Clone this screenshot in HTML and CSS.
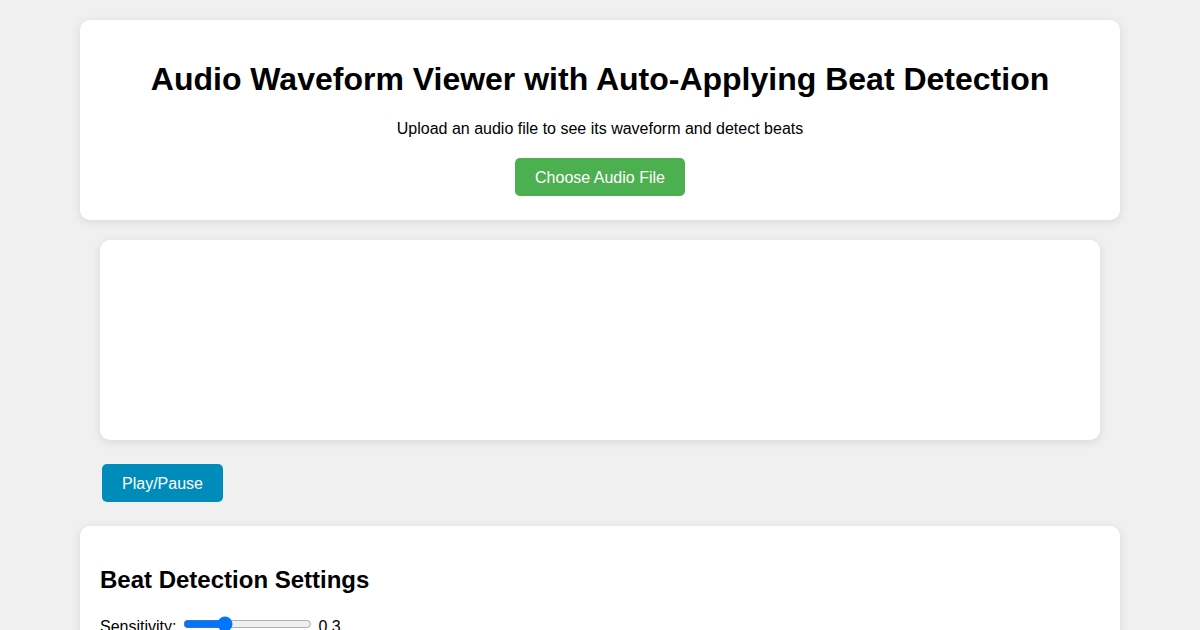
FILE: index.html
```html
<!DOCTYPE html>
<html>
<head>
<meta charset="utf-8">
<title>Audio Waveform Viewer</title>
<link rel="stylesheet" href="styles.css">
</head>
<body>
<div class="container">
  <div class="card header">
    <h1>Audio Waveform Viewer with Auto-Applying Beat Detection</h1>
    <p>Upload an audio file to see its waveform and detect beats</p>
    <div class="upload"><label class="btn btn-green">Choose Audio File</label></div>
  </div>
  <div class="waveform"></div>
  <div class="controls"><button class="btn btn-blue">Play/Pause</button></div>
  <div class="card settings">
    <h2>Beat Detection Settings</h2>
    <div class="row">
      <label>Sensitivity:</label> <input type="range" min="0" max="1" step="0.1" value="0.3"> <span>0.3</span>
    </div>
  </div>
</div>
</body>
</html>
```
FILE: styles.css
```css
html, body { margin: 0; padding: 0; }
body {
  background: #f0f0f0;
  font-family: "Liberation Sans", Arial, sans-serif;
  color: #000;
}
.container {
  max-width: 1040px;
  margin: 0 auto;
  padding: 20px 0;
}
.card {
  background: #fff;
  border-radius: 10px;
  box-shadow: 0 2px 10px rgba(0,0,0,0.1);
  padding: 20px;
}
.header { text-align: center; padding-bottom: 24px; }
.header h1 { font-size: 32px; margin: 21.44px 0; }
.header p { font-size: 16px; margin: 0; }
.upload { margin-top: 20px; }
.btn {
  display: inline-block;
  border: none;
  color: #fff;
  font-family: "Liberation Sans", Arial, sans-serif;
  font-size: 16px;
  line-height: 18px;
  padding: 11px 20px 9px;
  border-radius: 5px;
  cursor: pointer;
}
.btn-green { background: #4CAF50; }
.btn-blue { background: #008CBA; }
.waveform {
  margin: 20px 20px 0;
  height: 200px;
  background: #fff;
  border-radius: 10px;
  box-shadow: 0 2px 10px rgba(0,0,0,0.1);
}
.controls { padding: 24px 22px; }
.settings h2 { font-size: 24px; margin: 19.92px 0; }
.row { font-size: 16px; }
.row input { width: 129px; margin: 2px; }
```
